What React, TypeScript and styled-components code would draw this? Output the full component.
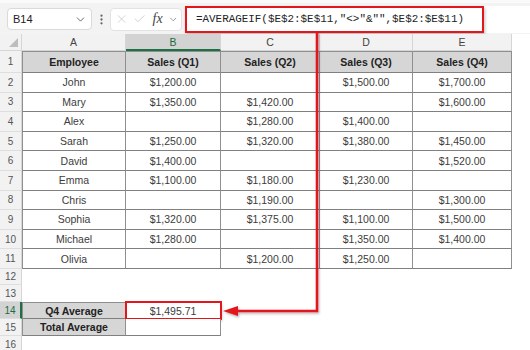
import React from "react";
import styled, { createGlobalStyle } from "styled-components";
import { ChevronDown, EllipsisVertical, X, Check } from "lucide-react";

const GlobalStyle = createGlobalStyle`
  body {
    margin: 0;
    background: #ffffff;
    font-family: "Liberation Sans", Arial, sans-serif;
  }
`;

const COLS = "22px 104px 95px 99px 93px 99px 1fr";
const RED = "#e3161c";

const Page = styled.div`
  position: relative;
  width: 530px;
  height: 350px;
  overflow: hidden;
  background: #fff;
`;

const Toolbar = styled.div`
  height: 34px;
  background: #f3f3f3;
  display: flex;
  align-items: center;
  padding: 4px 0 3px 7px;
  box-sizing: border-box;
  border-top: 3px solid #fafafa;
`;

const NameBox = styled.div`
  width: 85px;
  height: 22px;
  box-sizing: border-box;
  background: #fff;
  border: 1px solid #dadada;
  border-radius: 4px;
  display: flex;
  align-items: center;
  justify-content: space-between;
  padding: 0 4px 0 5px;
  font-size: 11px;
  color: #222;
`;

const Dots = styled.div`
  width: 18px;
  display: flex;
  justify-content: center;
  color: #666;
`;

const FxBox = styled.div`
  width: 72px;
  height: 23px;
  box-sizing: border-box;
  background: #fff;
  border: 1px solid #e2e2e2;
  border-radius: 4px;
  display: flex;
  align-items: center;
  gap: 5px;
  padding: 0 3px 0 4px;
  color: #c4c4c4;
`;

const Fx = styled.span`
  font-family: "Liberation Serif", serif;
  font-style: italic;
  font-size: 14px;
  color: #444;
  margin-left: 1px;
`;

const FormulaBar = styled.div`
  flex: 1;
  height: 27px;
  margin-left: 3px;
  background: #fff;
  display: flex;
`;

const FormulaText = styled.div`
  width: 299px;
  box-sizing: border-box;
  border: 2px solid ${RED};
  box-shadow: 1px 2px 3px rgba(0, 0, 0, 0.25);
  display: flex;
  align-items: center;
  padding-left: 9px;
  font-family: "Liberation Mono", monospace;
  font-size: 10.9px;
  color: #222;
  white-space: pre;
`;

const Row = styled.div<{ $h: number }>`
  display: grid;
  grid-template-columns: ${COLS};
  height: ${(p) => p.$h}px;
`;

const Corner = styled.div`
  background: #f2f2f2;
  border-right: 1px solid #d6d6d6;
  border-bottom: 1px solid #d6d6d6;
  position: relative;
  display: flex;
  align-items: flex-end;
  justify-content: flex-end;
  padding: 0 3px 3px 0;
`;

const ColHead = styled.div<{ $active?: boolean }>`
  background: ${(p) => (p.$active ? "#d3d3d3" : "#f2f2f2")};
  border-right: 1px solid #d6d6d6;
  border-bottom: ${(p) => (p.$active ? "2px solid #1e7145" : "1px solid #d6d6d6")};
  display: flex;
  align-items: center;
  justify-content: center;
  font-size: 10.5px;
  color: ${(p) => (p.$active ? "#1e6b40" : "#444")};
`;

const Blank = styled.div<{ $bar?: boolean }>`
  background: ${(p) => (p.$bar ? "#f2f2f2" : "#fff")};
`;

const RowHead = styled.div<{ $active?: boolean }>`
  background: ${(p) => (p.$active ? "#d3d3d3" : "#f2f2f2")};
  border-right: ${(p) => (p.$active ? "2px solid #1e7145" : "1px solid #d6d6d6")};
  border-bottom: 1px solid #dedede;
  display: flex;
  align-items: center;
  justify-content: center;
  font-size: 10px;
  color: ${(p) => (p.$active ? "#1e6b40" : "#555")};
`;

const Cell = styled.div<{
  $head?: boolean;
  $boxed?: boolean;
  $left?: boolean;
  $top?: boolean;
  $red?: boolean;
}>`
  position: relative;
  box-sizing: border-box;
  background: ${(p) => (p.$head ? "#d6d6d6" : "#fff")};
  border-right: ${(p) => (p.$boxed ? "1px solid #8f8f8f" : "none")};
  border-bottom: ${(p) => (p.$boxed ? "1.5px solid #808080" : "none")};
  border-left: ${(p) => (p.$left ? "1px solid #8f8f8f" : "none")};
  border-top: ${(p) => (p.$top ? "1px solid #8f8f8f" : "none")};
  outline: ${(p) => (p.$red ? `2px solid ${RED}` : "none")};
  outline-offset: -1px;
  box-shadow: ${(p) => (p.$red ? "1px 2px 3px rgba(0,0,0,0.25)" : "none")};
  display: flex;
  align-items: center;
  justify-content: center;
  font-size: 10.5px;
  font-weight: ${(p) => (p.$head ? 700 : 400)};
  color: ${(p) => (p.$head ? "#222" : "#3c3c3c")};
  white-space: nowrap;
`;

const Overlay = styled.svg`
  position: absolute;
  left: 0;
  top: 0;
  pointer-events: none;
`;

const money = (v: number | null) =>
  v == null
    ? ""
    : "$" + v.toLocaleString("en-US", { minimumFractionDigits: 2, maximumFractionDigits: 2 });

const data: [string, (number | null)[]][] = [
  ["John", [1200, null, 1500, 1700]],
  ["Mary", [1350, 1420, null, 1600]],
  ["Alex", [null, 1280, 1400, null]],
  ["Sarah", [1250, 1320, 1380, 1450]],
  ["David", [1400, null, null, 1520]],
  ["Emma", [1100, 1180, 1230, null]],
  ["Chris", [null, 1190, null, 1300]],
  ["Sophia", [1320, 1375, 1100, 1500]],
  ["Michael", [1280, null, 1350, 1400]],
  ["Olivia", [null, 1200, 1250, null]],
];

const headers = ["Employee", "Sales (Q1)", "Sales (Q2)", "Sales (Q3)", "Sales (Q4)"];

export default function App() {
  return (
    <Page>
      <GlobalStyle />
      <Toolbar>
        <NameBox>
          <span>B14</span>
          <ChevronDown size={13} color="#555" strokeWidth={1.6} />
        </NameBox>
        <Dots>
          <EllipsisVertical size={13} strokeWidth={2.2} />
        </Dots>
        <FxBox>
          <X size={14} strokeWidth={1.4} />
          <Check size={14} strokeWidth={1.4} />
          <Fx>fx</Fx>
          <ChevronDown size={11} color="#666" strokeWidth={1.5} />
        </FxBox>
        <FormulaBar>
          <FormulaText>{'=AVERAGEIF($E$2:$E$11,"<>"&"",$E$2:$E$11)'}</FormulaText>
        </FormulaBar>
      </Toolbar>

      <Row $h={17}>
        <Corner>
          <svg width="9" height="9" viewBox="0 0 9 9">
            <polygon points="9,0 9,9 0,9" fill="#bdbdbd" />
          </svg>
        </Corner>
        {["A", "B", "C", "D", "E"].map((c) => (
          <ColHead key={c} $active={c === "B"}>
            {c}
          </ColHead>
        ))}
        <Blank />
      </Row>

      <Row $h={22}>
        <RowHead>1</RowHead>
        {headers.map((h, i) => (
          <Cell key={h} $head $boxed $top $left={i === 0}>
            {h}
          </Cell>
        ))}
        <Blank />
      </Row>

      {data.map(([name, vals], r) => (
        <Row key={name} $h={19.6}>
          <RowHead>{r + 2}</RowHead>
          <Cell $boxed $left>
            {name}
          </Cell>
          {vals.map((v, i) => (
            <Cell key={i} $boxed>
              {money(v)}
            </Cell>
          ))}
          <Blank />
        </Row>
      ))}

      {[12, 13].map((n) => (
        <Row key={n} $h={16.5}>
          <RowHead>{n}</RowHead>
          <Blank />
          <Blank />
          <Blank />
          <Blank />
          <Blank />
          <Blank />
        </Row>
      ))}

      <Row $h={17.5}>
        <RowHead $active>14</RowHead>
        <Cell $head $boxed $left $top>
          Q4 Average
        </Cell>
        <Cell $boxed $top $red>
          $1,495.71
        </Cell>
        <Blank />
        <Blank />
        <Blank />
        <Blank />
      </Row>
      <Row $h={17}>
        <RowHead>15</RowHead>
        <Cell $head $boxed $left>
          Total Average
        </Cell>
        <Cell $boxed />
        <Blank />
        <Blank />
        <Blank />
        <Blank />
      </Row>
      <Row $h={17}>
        <RowHead>16</RowHead>
        <Blank />
        <Blank />
        <Blank />
        <Blank />
        <Blank />
        <Blank />
      </Row>

      <Overlay width="530" height="350" viewBox="0 0 530 350">
        <defs>
          <filter id="sh" x="-20%" y="-20%" width="140%" height="140%">
            <feDropShadow dx="1" dy="1.5" stdDeviation="1" floodColor="#000" floodOpacity="0.3" />
          </filter>
        </defs>
        <g filter="url(#sh)">
          <polyline
            points="317,32 317,311 236,311"
            fill="none"
            stroke={RED}
            strokeWidth="2.5"
            strokeLinejoin="miter"
          />
          <polygon points="223,311 238,306 238,316" fill={RED} />
        </g>
      </Overlay>
    </Page>
  );
}
